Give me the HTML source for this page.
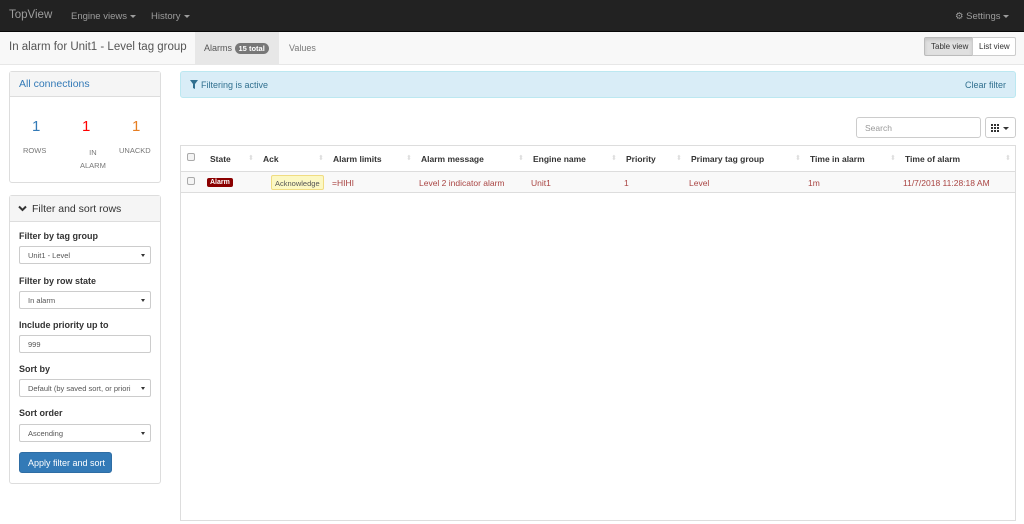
<!DOCTYPE html>
<html><head><style>
*{box-sizing:border-box;margin:0;padding:0}
body{width:1024px;height:524px;overflow:hidden;font-family:"Liberation Sans",Arial,sans-serif;font-size:9px;color:#333;background:#fff;position:relative}
.a{position:absolute}
.nav{left:0;top:0;width:1024px;height:32px;background:#222;border-bottom:1px solid #080808}
.nav span{position:absolute;top:11px;color:#9d9d9d;font-size:9.5px}
.car{display:inline-block;border-top:3px solid #9d9d9d;border-left:3px solid transparent;border-right:3px solid transparent;vertical-align:middle;margin-left:3px}
.sub{left:0;top:32px;width:1024px;height:33px;background:#f8f8f8;border-bottom:1px solid #e7e7e7}
.panel{border:1px solid #ddd;border-radius:3px;background:#fff}
.ph{background:#f5f5f5;border-bottom:1px solid #ddd}
.lab{font-weight:bold;font-size:9px;color:#333;left:19px}
.inp{left:19px;width:132px;height:18px;border:1px solid #ccc;border-radius:2px;font-size:7.5px;color:#555;padding:4px 8px;background:#fff}
.inp.s::after{content:"";position:absolute;right:5px;top:7px;border-top:3px solid #333;border-left:2px solid transparent;border-right:2px solid transparent}
.th{font-weight:bold;top:154px;color:#333;font-size:8.5px}
.td{top:178px;color:#a94442;font-size:8.5px}
.srt{top:154px;color:#ddd;font-size:7px}
.cb{width:8px;height:8px;border:1px solid #aaa;border-radius:2px;background:#f4f4f4}
</style></head><body>
<div class="a nav">
<span style="left:9px;font-size:11.5px;top:9px">TopView</span>
<span style="left:71px">Engine views<i class="car"></i></span>
<span style="left:151px">History<i class="car"></i></span>
<span style="left:955px">⚙ Settings<i class="car"></i></span>
</div>
<div class="a sub">
<div class="a" style="left:9px;top:9px;font-size:11.5px;color:#555;white-space:nowrap">In alarm for Unit1 - Level tag group</div>
<div class="a" style="left:195px;top:0;width:84px;height:33px;background:#e7e7e7"></div>
<div class="a" style="left:204px;top:11px;color:#555;font-size:9px">Alarms <span style="background:#777;color:#fff;border-radius:6px;padding:1px 4px;font-size:7.5px;font-weight:bold">15 total</span></div>
<div class="a" style="left:289px;top:11px;color:#777">Values</div>
<div class="a" style="left:924px;top:5px;width:49px;height:19px;background:#e0e0e0;border:1px solid #bbb;border-radius:2px 0 0 2px;box-shadow:inset 0 2px 3px rgba(0,0,0,.12);font-size:8px;padding:4px 0 0 6px">Table view</div>
<div class="a" style="left:972px;top:5px;width:44px;height:19px;background:#fff;border:1px solid #ccc;border-radius:0 2px 2px 0;font-size:8px;padding:4px 0 0 6px">List view</div>
</div>

<div class="a panel" style="left:9px;top:71px;width:152px;height:112px">
<div class="ph" style="height:25px;padding:6px 9px;color:#337ab7;font-size:10.5px">All connections</div>
<div class="a" style="left:22px;top:46px;color:#337ab7;font-size:15px">1</div>
<div class="a" style="left:72px;top:46px;color:#f00;font-size:15px">1</div>
<div class="a" style="left:122px;top:46px;color:#e67e22;font-size:15px">1</div>
<div class="a" style="left:13px;top:74px;color:#777;font-size:7.5px">ROWS</div>
<div class="a" style="left:70px;top:74px;color:#777;font-size:7.5px;text-align:center;line-height:13px">IN<br>ALARM</div>
<div class="a" style="left:109px;top:74px;color:#777;font-size:7.5px">UNACKD</div>
</div>

<div class="a panel" style="left:9px;top:195px;width:152px;height:289px">
<div class="ph" style="height:26px;padding:7px 0 0 22px;font-size:10.5px;color:#333">Filter and sort rows</div>
</div>
<svg class="a" style="left:18px;top:205px" width="9" height="7"><path d="M1 1.5 L4.5 5 L8 1.5" stroke="#333" stroke-width="2" fill="none"/></svg>
<div class="a lab" style="top:231px">Filter by tag group</div>
<div class="a inp s" style="top:246px">Unit1 - Level</div>
<div class="a lab" style="top:276px">Filter by row state</div>
<div class="a inp s" style="top:291px">In alarm</div>
<div class="a lab" style="top:320px">Include priority up to</div>
<div class="a inp" style="top:335px">999</div>
<div class="a lab" style="top:364px">Sort by</div>
<div class="a inp s" style="top:379px">Default (by saved sort, or priori</div>
<div class="a lab" style="top:408px">Sort order</div>
<div class="a inp s" style="top:424px">Ascending</div>
<div class="a" style="left:19px;top:452px;width:93px;height:21px;background:#337ab7;border:1px solid #2e6da4;border-radius:3px;color:#fff;font-size:9px;padding:5px 0 0 8px">Apply filter and sort</div>

<div class="a" style="left:180px;top:71px;width:836px;height:27px;background:#d9edf7;border:1px solid #bce8f1;border-radius:3px"></div>
<svg class="a" style="left:190px;top:80px" width="8" height="9"><path d="M0 0 H8 L5 4 V9 L3 8 V4 Z" fill="#31708f"/></svg>
<div class="a" style="left:201px;top:80px;color:#31708f;font-size:9px">Filtering is active</div>
<div class="a" style="left:965px;top:80px;color:#31708f;font-size:9px">Clear filter</div>

<div class="a" style="left:856px;top:117px;width:125px;height:21px;border:1px solid #ccc;border-radius:3px;color:#999;font-size:8.5px;padding:5px 8px">Search</div>
<div class="a" style="left:985px;top:117px;width:31px;height:21px;border:1px solid #ccc;border-radius:3px"></div>
<svg class="a" style="left:991px;top:124px" width="9" height="8"><g fill="#333"><rect x="0" y="0" width="2" height="2"/><rect x="3" y="0" width="2" height="2"/><rect x="6" y="0" width="2" height="2"/><rect x="0" y="3" width="2" height="2"/><rect x="3" y="3" width="2" height="2"/><rect x="6" y="3" width="2" height="2"/><rect x="0" y="6" width="2" height="2"/><rect x="3" y="6" width="2" height="2"/><rect x="6" y="6" width="2" height="2"/></g></svg>
<div class="a" style="left:1003px;top:127px;border-top:3px solid #333;border-left:3px solid transparent;border-right:3px solid transparent"></div>

<div class="a" style="left:180px;top:145px;width:836px;height:376px;border:1px solid #ddd"></div>
<div class="a" style="left:181px;top:171px;width:834px;height:1px;background:#ddd"></div>
<div class="a" style="left:181px;top:172px;width:834px;height:21px;background:#f9f9f9;border-bottom:1px solid #ddd"></div>
<div class="a cb" style="left:187px;top:153px"></div>
<div class="a cb" style="left:187px;top:177px"></div>
<div class="a th" style="left:210px">State</div>
<div class="a th" style="left:263px">Ack</div>
<div class="a th" style="left:333px">Alarm limits</div>
<div class="a th" style="left:421px">Alarm message</div>
<div class="a th" style="left:533px">Engine name</div>
<div class="a th" style="left:626px">Priority</div>
<div class="a th" style="left:691px">Primary tag group</div>
<div class="a th" style="left:810px">Time in alarm</div>
<div class="a th" style="left:905px">Time of alarm</div>
<div class="a srt" style="left:248px">⬍</div>
<div class="a srt" style="left:318px">⬍</div>
<div class="a srt" style="left:406px">⬍</div>
<div class="a srt" style="left:518px">⬍</div>
<div class="a srt" style="left:611px">⬍</div>
<div class="a srt" style="left:676px">⬍</div>
<div class="a srt" style="left:795px">⬍</div>
<div class="a srt" style="left:890px">⬍</div>
<div class="a srt" style="left:1005px">⬍</div>
<div class="a" style="left:207px;top:178px;background:#8b0000;color:#fff;font-size:7px;font-weight:bold;padding:1px 3px;border-radius:2px">Alarm</div>
<div class="a" style="left:271px;top:175px;width:53px;height:15px;background:#fcf8c3;border:1px solid #f0dc82;border-radius:2px;font-size:7.5px;padding:3px 0 0 3px;color:#555">Acknowledge</div>
<div class="a td" style="left:332px">=HIHI</div>
<div class="a td" style="left:419px">Level 2 indicator alarm</div>
<div class="a td" style="left:531px">Unit1</div>
<div class="a td" style="left:624px">1</div>
<div class="a td" style="left:689px">Level</div>
<div class="a td" style="left:808px">1m</div>
<div class="a td" style="left:903px">11/7/2018 11:28:18 AM</div>
</body></html>
